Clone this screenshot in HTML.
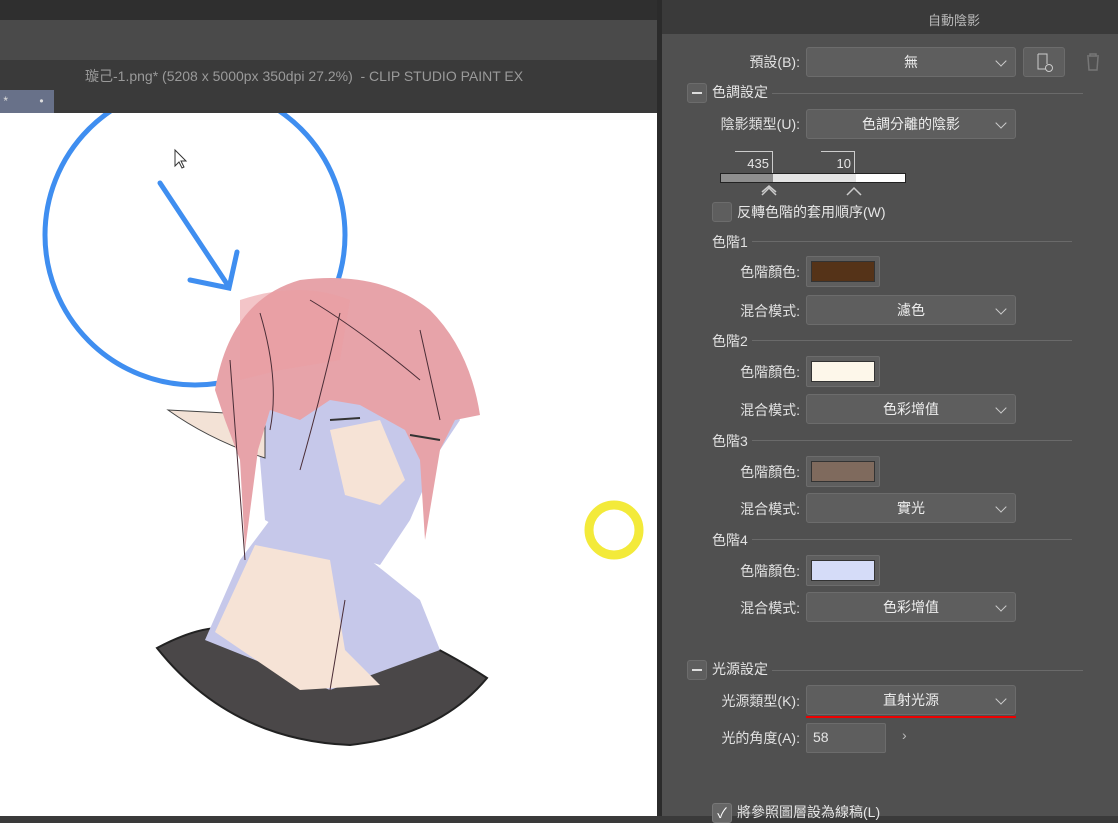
<!DOCTYPE html>
<html><head><meta charset="utf-8"><style>
*{margin:0;padding:0;box-sizing:border-box}
body{width:1118px;height:816px;overflow:hidden;background:#3a3a3a;font-family:"Liberation Sans","Noto Sans CJK TC",sans-serif;font-size:14px;color:#e6e6e6;position:relative}
.a{position:absolute}
.dd{position:absolute;left:806px;width:210px;height:30px;background:#5e5e5e;border:1px solid #6c6c6c;border-radius:3px;text-align:center;line-height:28px;color:#eee}
.dd:after{content:"";position:absolute;right:10px;top:9px;width:7px;height:7px;border-right:1.5px solid #ccc;border-bottom:1.5px solid #ccc;transform:rotate(45deg)}
.lb{position:absolute;width:120px;left:680px;text-align:right;color:#e2e2e2}
.sec{position:absolute;left:712px;color:#e2e2e2}
.ln{position:absolute;height:1px;background:#6a6a6a}
.sw{position:absolute;left:806px;width:74px;height:31px;background:#5e5e5e;border:1px solid #6c6c6c;border-radius:2px}
.sw i{position:absolute;left:4px;top:4px;right:4px;bottom:4px;border:1px solid #333}
.mn{position:absolute;left:687px;width:20px;height:20px;background:#5e5e5e;border:1px solid #6c6c6c;border-radius:3px}
.mn:after{content:"";position:absolute;left:4px;right:4px;top:8px;height:2px;background:#ddd}
</style></head><body>
<div class="a" style="left:0;top:0;width:660px;height:20px;background:#2f2f2f"></div>
<div class="a" style="left:0;top:20px;width:657px;height:40px;background:#4a4a4a"></div>
<div class="a" style="left:0;top:60px;width:657px;height:53px;background:#3a3a3a"></div>
<div class="a" style="left:85px;top:66px;color:#9a9a9a;font-size:14px">璇己-1.png* (5208 x 5000px 350dpi 27.2%)&nbsp; - CLIP STUDIO PAINT EX</div>
<div class="a" style="left:0;top:90px;width:54px;height:23px;background:#687189;color:#ddd;font-size:12px;line-height:23px">&nbsp;* <span style="margin-left:28px">•</span></div>
<div class="a" style="left:0;top:113px;width:657px;height:703px;background:#fff"></div>
<svg class="a" style="left:0;top:113px" width="657" height="703" viewBox="0 113 657 703">
<circle cx="195" cy="235" r="150" fill="none" stroke="#3f8ef0" stroke-width="5"/>
<path d="M160 183 L229 287 M190 280 L229 288 L237 252" fill="none" stroke="#3f8ef0" stroke-width="5" stroke-linecap="round"/>
<path d="M175 150 l0 16 l4 -4 l3 6 l2 -1 l-3 -6 l5 0z" fill="#fff" stroke="#333"/>
<path d="M157 648 Q200 625 230 628 L420 640 Q460 660 487 678 Q440 735 350 745 Q230 740 157 648z" fill="#4a4748" stroke="#222" stroke-width="2"/>
<path d="M205 640 L240 560 L270 520 L370 560 L420 600 L440 650 L330 690 Z" fill="#c6c8ea"/>
<path d="M215 632 L255 545 L330 560 L345 650 L380 685 L300 690z" fill="#f6e3d6"/>
<path d="M255 400 L265 520 L300 540 L380 565 L410 520 L440 450 L460 420 L430 370 L320 350z" fill="#c6c8ea"/>
<path d="M330 430 L380 420 L405 480 L380 505 L345 495z" fill="#f6e3d6"/>
<path d="M168 410 L265 415 L265 458 Q210 440 168 410z" fill="#f3e2d6" stroke="#444"/>
<path d="M215 390 Q230 300 300 280 Q380 270 430 310 Q470 350 480 415 L455 420 L440 450 L425 540 L420 460 L405 430 L360 405 L330 400 L300 420 L270 410 L258 450 L245 550 L240 460 L225 420z" fill="#e7a3a9"/>
<path d="M240 300 Q300 280 350 300 L340 360 L280 370 L240 380z" fill="#eb9ea3" opacity=".6"/>
<path d="M310 300 Q360 330 420 380 M260 313 Q280 380 270 430 M340 313 Q320 400 300 470 M230 360 L245 560 M420 330 L440 420 M345 600 L330 690" stroke="#4a2d36" fill="none"/>
<path d="M330 420 L360 418 M410 435 L440 440" stroke="#333" stroke-width="2"/>
<circle cx="614" cy="530" r="25" fill="none" stroke="#f3ea3a" stroke-width="9"/>
</svg>
<div class="a" style="left:657px;top:0;width:5px;height:816px;background:#2b2b2b"></div>
<div class="a" style="left:662px;top:0;width:456px;height:34px;background:#3a3a3a"></div>
<div class="a" style="left:928px;top:10px;color:#bbb;font-size:13px">自動陰影</div>
<div class="a" style="left:662px;top:34px;width:456px;height:782px;background:#505050"></div>
<div class="lb" style="top:52px">預設(B):</div>
<div class="dd" style="top:47px">無</div>
<div class="a" style="left:1023px;top:47px;width:42px;height:30px;background:#5e5e5e;border:1px solid #6c6c6c;border-radius:3px"></div>
<svg class="a" style="left:1036px;top:52px" width="20" height="22"><path d="M2 2h9v10M2 2v15h8" fill="none" stroke="#ccc"/><circle cx="13" cy="16" r="3.5" fill="none" stroke="#ccc"/></svg>
<svg class="a" style="left:1085px;top:52px" width="16" height="20"><path d="M2 4h12M5 4v-2h6v2M3 5l1 13h8l1-13" fill="none" stroke="#777" stroke-width="1.5"/></svg>
<div class="mn" style="top:83px"></div><div class="a" style="left:712px;top:82px">色調設定</div><div class="ln" style="left:772px;width:311px;top:93px"></div>
<div class="lb" style="top:114px">陰影類型(U):</div>
<div class="dd" style="top:109px">色調分離的陰影</div>
<div class="a" style="left:735px;top:151px;width:38px;height:22px;border-top:1px solid #ccc;border-right:1px solid #ccc;font-size:13px;text-align:right;padding-right:3px;line-height:24px">435</div>
<div class="a" style="left:821px;top:151px;width:34px;height:22px;border-top:1px solid #ccc;border-right:1px solid #ccc;font-size:13px;text-align:right;padding-right:3px;line-height:24px">10</div>
<div class="a" style="left:720px;top:173px;width:186px;height:10px;border:1px solid #222;background:linear-gradient(90deg,#8e8e8e 0 52px,#e4e4e4 52px 135px,#fff 135px)"></div>
<svg class="a" style="left:758px;top:185px" width="110" height="12"><path d="M4 10l7-7 7 7M4 7l7-6 7 6" fill="none" stroke="#ccc" stroke-width="1.5"/><path d="M89 10l7-7 7 7" fill="none" stroke="#ccc" stroke-width="1.5"/></svg>
<div class="a" style="left:712px;top:202px;width:20px;height:20px;background:#5e5e5e;border:1px solid #6c6c6c;border-radius:3px"></div>
<div class="a" style="left:737px;top:202px">反轉色階的套用順序(W)</div>
<div class="sec" style="top:232px">色階1</div><div class="ln" style="left:752px;width:320px;top:241px"></div>
<div class="lb" style="top:262px">色階顏色:</div><div class="sw" style="top:256px"><i style="background:#553318"></i></div>
<div class="lb" style="top:301px">混合模式:</div><div class="dd" style="top:295px">濾色</div>
<div class="sec" style="top:331px">色階2</div><div class="ln" style="left:752px;width:320px;top:340px"></div>
<div class="lb" style="top:362px">色階顏色:</div><div class="sw" style="top:356px"><i style="background:#fdf7ea"></i></div>
<div class="lb" style="top:400px">混合模式:</div><div class="dd" style="top:394px">色彩增值</div>
<div class="sec" style="top:431px">色階3</div><div class="ln" style="left:752px;width:320px;top:440px"></div>
<div class="lb" style="top:462px">色階顏色:</div><div class="sw" style="top:456px"><i style="background:#7f6a5d"></i></div>
<div class="lb" style="top:499px">混合模式:</div><div class="dd" style="top:493px">實光</div>
<div class="sec" style="top:530px">色階4</div><div class="ln" style="left:752px;width:320px;top:539px"></div>
<div class="lb" style="top:561px">色階顏色:</div><div class="sw" style="top:555px"><i style="background:#d5dcf8"></i></div>
<div class="lb" style="top:598px">混合模式:</div><div class="dd" style="top:592px">色彩增值</div>
<div class="mn" style="top:660px"></div><div class="a" style="left:712px;top:659px">光源設定</div><div class="ln" style="left:772px;width:311px;top:670px"></div>
<div class="lb" style="top:691px">光源類型(K):</div><div class="dd" style="top:685px">直射光源</div>
<div class="a" style="left:806px;top:716px;width:210px;height:2px;background:#e00"></div>
<div class="lb" style="top:728px">光的角度(A):</div>
<div class="a" style="left:806px;top:723px;width:80px;height:30px;background:#5e5e5e;border:1px solid #6c6c6c;border-radius:2px;padding-left:6px;line-height:26px">58</div>
<div class="a" style="left:902px;top:727px;color:#bbb">›</div>
<div class="a" style="left:712px;top:803px;width:20px;height:20px;background:#666;border:1px solid #777;border-radius:3px;color:#fff;text-align:center;line-height:18px">✓</div>
<div class="a" style="left:737px;top:802px">將參照圖層設為線稿(L)</div>
</body></html>
